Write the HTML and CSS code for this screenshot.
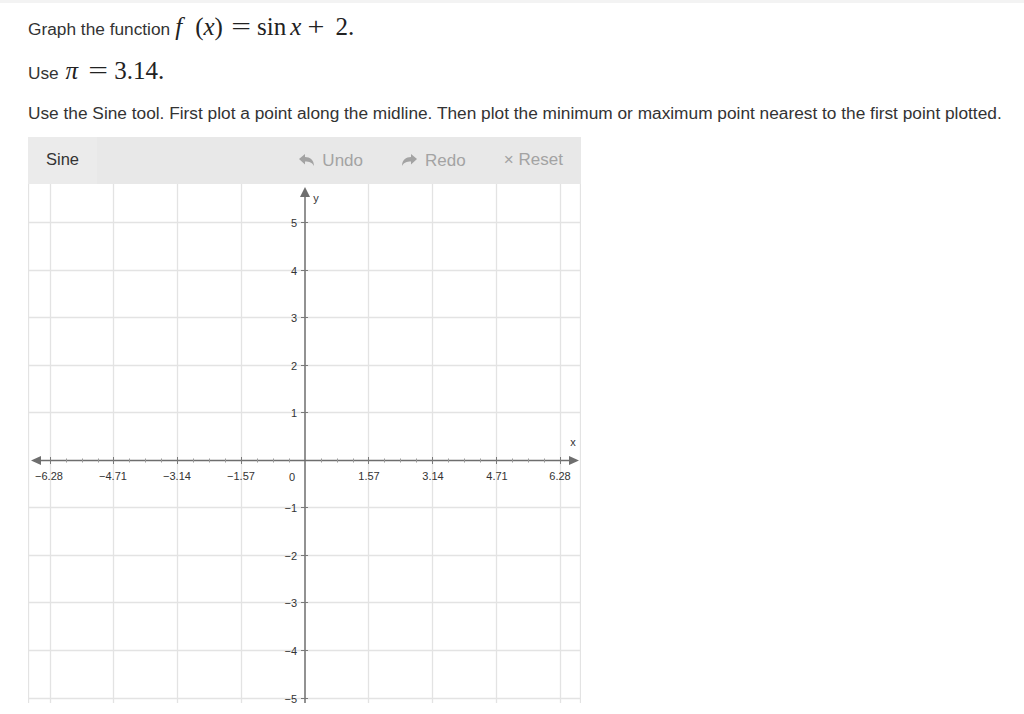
FILE: index.html
```html
<!DOCTYPE html>
<html>
<head>
<meta charset="utf-8">
<link rel="stylesheet" href="styles.css">
</head>
<body>
<div class="page">
  <p class="line l1">Graph the function<span class="math"><i class="mf">f</i>(<i>x</i>)<span class="eq">=</span><span class="fn">sin</span><i>x</i><span class="pl">+</span>2.</span></p>
  <p class="line l2">Use <span class="math"><i class="pi">π</i><span class="eq eq2">=</span>3.14.</span></p>
  <p class="line l3">Use the Sine tool. First plot a point along the midline. Then plot the minimum or maximum point nearest to the first point plotted.</p>

  <div class="widget">
    <div class="toolbar">
      <div class="tab">Sine</div>
      <div class="actions">
        <span class="act undo"><svg class="ico" width="15" height="12" viewBox="0 0 15 12"><path d="M0 5 L6 0 L6 3 C11 3 15 6 15 12 C13 8.5 10.5 7.5 6 7.5 L6 10.5 Z" fill="#a3a3a3"/></svg>Undo</span>
        <span class="act redo"><svg class="ico" width="15" height="12" viewBox="0 0 15 12"><path d="M15 5 L9 0 L9 3 C4 3 0 6 0 12 C2 8.5 4.5 7.5 9 7.5 L9 10.5 Z" fill="#a3a3a3"/></svg>Redo</span>
        <span class="act reset"><span class="x">×</span>Reset</span>
      </div>
    </div>
    <svg class="graph" width="553" height="519" viewBox="0 0 553 519">
      <g stroke="#e3e3e3" stroke-width="1.3" fill="none">
        <line x1="0.5" y1="0" x2="0.5" y2="519"/>
        <line x1="22.5" y1="0" x2="22.5" y2="519"/>
        <line x1="85.5" y1="0" x2="85.5" y2="519"/>
        <line x1="149.5" y1="0" x2="149.5" y2="519"/>
        <line x1="213.5" y1="0" x2="213.5" y2="519"/>
        <line x1="340.5" y1="0" x2="340.5" y2="519"/>
        <line x1="404.5" y1="0" x2="404.5" y2="519"/>
        <line x1="468.5" y1="0" x2="468.5" y2="519"/>
        <line x1="532.5" y1="0" x2="532.5" y2="519"/>
        <line x1="552.5" y1="0" x2="552.5" y2="519"/>
        <line x1="0" y1="38.5" x2="553" y2="38.5"/>
        <line x1="0" y1="86.5" x2="553" y2="86.5"/>
        <line x1="0" y1="133.5" x2="553" y2="133.5"/>
        <line x1="0" y1="181.5" x2="553" y2="181.5"/>
        <line x1="0" y1="228.5" x2="553" y2="228.5"/>
        <line x1="0" y1="323.5" x2="553" y2="323.5"/>
        <line x1="0" y1="371.5" x2="553" y2="371.5"/>
        <line x1="0" y1="418.5" x2="553" y2="418.5"/>
        <line x1="0" y1="466.5" x2="553" y2="466.5"/>
        <line x1="0" y1="514.5" x2="553" y2="514.5"/>
      </g>
      <g stroke="#6e6e6e" stroke-width="1.5" fill="none">
        <line x1="10" y1="276.5" x2="544" y2="276.5"/>
        <line x1="277" y1="10" x2="277" y2="519"/>
      </g>
      <g stroke="#9a9a9a" stroke-width="1" fill="none">
        <path d="M38.5 274.5v4 M54.5 274.5v4 M70.5 274.5v4 M101.5 274.5v4 M117.5 274.5v4 M133.5 274.5v4 M165.5 274.5v4 M181.5 274.5v4 M197.5 274.5v4 M229.5 274.5v4 M245.5 274.5v4 M261.5 274.5v4 M293.5 274.5v4 M309.5 274.5v4 M325.5 274.5v4 M356.5 274.5v4 M372.5 274.5v4 M388.5 274.5v4 M420.5 274.5v4 M436.5 274.5v4 M452.5 274.5v4 M484.5 274.5v4 M500.5 274.5v4 M516.5 274.5v4"/>
      </g>
      <g stroke="#7a7a7a" stroke-width="1" fill="none">
        <path d="M22.5 273v7 M85.5 273v7 M149.5 273v7 M213.5 273v7 M340.5 273v7 M404.5 273v7 M468.5 273v7 M532.5 273v7"/>
        <path d="M273 38.5h7 M273 86.5h7 M273 133.5h7 M273 181.5h7 M273 228.5h7 M273 323.5h7 M273 371.5h7 M273 418.5h7 M273 466.5h7 M273 514.5h7"/>
      </g>
      <g fill="#6e6e6e">
        <path d="M277 3 L282 13 L272 13 Z"/>
        <path d="M3 276.5 L13 272 L13 281 Z"/>
        <path d="M551 276.5 L541 272 L541 281 Z"/>
      </g>
      <g class="lbl" text-anchor="middle">
        <text x="21" y="296">−6.28</text>
        <text x="85" y="296">−4.71</text>
        <text x="149" y="296">−3.14</text>
        <text x="213" y="296">−1.57</text>
        <text x="264" y="297">0</text>
        <text x="341" y="296">1.57</text>
        <text x="405" y="296">3.14</text>
        <text x="469" y="296">4.71</text>
        <text x="532" y="296">6.28</text>
        <text x="288" y="18">y</text>
        <text x="545" y="262">x</text>
      </g>
      <g class="lbl" text-anchor="end">
        <text x="269" y="42.5">5</text>
        <text x="269" y="90.5">4</text>
        <text x="269" y="137.5">3</text>
        <text x="269" y="185.5">2</text>
        <text x="269" y="232.5">1</text>
        <text x="269" y="327.5">−1</text>
        <text x="269" y="375.5">−2</text>
        <text x="269" y="422.5">−3</text>
        <text x="269" y="470.5">−4</text>
        <text x="269" y="518.5">−5</text>
      </g>
    </svg>
  </div>
</div>
</body>
</html>
```

FILE: styles.css
```css
html, body {
  margin: 0;
  padding: 0;
  background: #ffffff;
}
body {
  border-top: 3px solid #f3f3f3;
  font-family: "Liberation Sans", Arial, sans-serif;
  color: #333333;
}
.page {
  padding: 0 0 0 28px;
}
.line {
  margin: 0;
  font-size: 17.3px;
  line-height: 20px;
  height: 20px;
}
.l1 {
  padding-top: 14px;
}
.l2 {
  padding-top: 24px;
}
.l3 {
  padding-top: 22px;
}
.math {
  font-family: "Liberation Serif", "Times New Roman", serif;
  font-size: 25px;
  line-height: 20px;
  color: #222;
}
.l1 .math {
  margin-left: 5px;
}
.math i {
  font-style: italic;
}
.mf {
  margin-right: 13px;
}
.eq {
  display: inline-block;
  transform: scaleX(1.4);
  margin: 0 9px 0 11px;
}
.eq2 {
  margin: 0 9px 0 13px;
}
.fn {
  margin-right: 4px;
}
.pl {
  display: inline-block;
  transform: scaleX(1.2);
  margin: 0 12px 0 8px;
}
.pi {
  margin-left: 2px;
}
.widget {
  margin-top: 14px;
  width: 553px;
}
.toolbar {
  height: 47px;
  background: #e8e8e8;
  display: flex;
  align-items: stretch;
}
.tab {
  width: 69px;
  background: #ebebeb;
  font-size: 16.5px;
  color: #333;
  display: flex;
  align-items: center;
  padding-left: 18px;
  box-sizing: border-box;
  padding-bottom: 2px;
}
.actions {
  flex: 1;
  display: flex;
  justify-content: flex-end;
  align-items: center;
  padding-right: 18px;
  color: #a3a3a3;
  font-size: 17px;
}
.act {
  display: flex;
  align-items: center;
}
.undo {
  margin-right: 39px;
}
.redo {
  margin-right: 38px;
}
.ico {
  margin-right: 8px;
  position: relative;
  top: -1px;
}
.reset {
  position: relative;
  top: -1px;
}
.x {
  font-size: 17px;
  margin-right: 5px;
}
.graph {
  display: block;
}
.lbl text {
  font-family: "Liberation Sans", Arial, sans-serif;
  font-size: 11px;
  fill: #333;
}
```
